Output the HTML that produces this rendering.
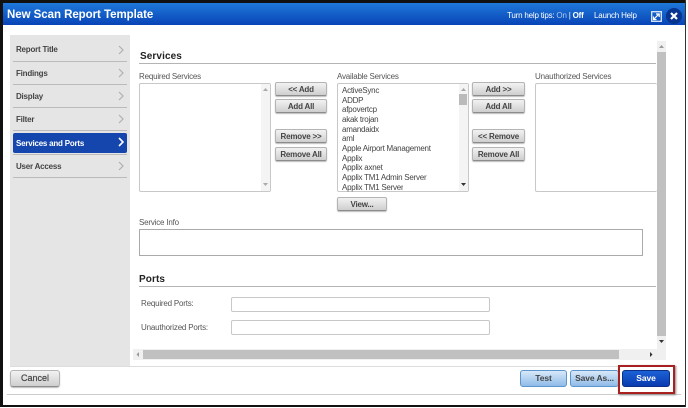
<!DOCTYPE html>
<html><head><meta charset="utf-8"><style>
html,body{margin:0;padding:0;background:#fff}
#p{position:relative;width:688px;height:408px;overflow:hidden;background:#fff;font-family:"Liberation Sans",sans-serif;font-size:8px;color:#444;filter:blur(.3px);letter-spacing:-.2px}
#p div{position:absolute}
.t{white-space:nowrap}
.si{left:16px;font-weight:bold;color:#444;font-size:8px;white-space:nowrap;letter-spacing:-.22px}
.sep{left:13px;width:114px;height:1px;background:#bbb}
.btn{background:linear-gradient(#f2f2f2,#cfcfcf);border:1px solid #b4b4b4;border-bottom:1px solid #8c8c8c;border-radius:2px;box-sizing:border-box;text-align:center;font-weight:bold;color:#444;font-size:8px;white-space:nowrap;box-shadow:0 1px 1px #bbb;letter-spacing:-.2px}
.box{border:1px solid #c8c8c8;box-sizing:border-box;background:#fff;border-radius:2px}
.lbl{color:#555;white-space:nowrap;font-size:8px;letter-spacing:-.2px}
.line{height:1px;background:#b4b4b4}
h2{position:absolute;margin:0;font-size:10px;font-weight:bold;color:#222;white-space:nowrap;letter-spacing:.1px}
.opt{left:342px;color:#444;font-size:8px;white-space:nowrap;line-height:10px;letter-spacing:-.25px}
.blue{background:linear-gradient(#d8e9f9,#8fbbe8);border:1px solid #5d94cc;border-radius:3px;box-sizing:border-box;text-align:center;font-weight:bold;color:#444;font-size:8.5px;white-space:nowrap;letter-spacing:-.1px}
</style></head><body><div id="p">
<div style="left:0;top:0;width:686px;height:3px;background:#111"></div>
<div style="left:0;top:0;width:2.500px;height:407px;background:#111"></div>
<div style="left:0;top:405px;width:686px;height:2px;background:#111"></div>
<div style="left:685px;top:0;width:1px;height:407px;background:#333"></div>
<div style="left:3px;top:3px;width:682px;height:22px;background:linear-gradient(#1f79da,#0844b6)"></div>
<div class="t" style="left:7px;top:8px;font-size:11.500px;font-weight:bold;color:#fff;line-height:14px;letter-spacing:-.05px">New Scan Report Template</div>
<div class="t" style="left:507px;top:11px;font-size:8px;color:#fff;line-height:10px;letter-spacing:-.2px">Turn help tips: <span style="color:#a9c8ee">On</span> | <b>Off</b></div>
<div class="t" style="left:594px;top:11px;font-size:8px;color:#fff;line-height:10px;letter-spacing:-.2px">Launch Help</div>
<div style="left:651px;top:11px;width:11px;height:11px"><svg width="11" height="11" viewBox="0 0 11 11" style="display:block"><rect x=".7" y=".7" width="9.6" height="9.6" fill="none" stroke="#dfeaf8" stroke-width="1.3"/><path d="M3 8L8 3M5 3h3.2v3M2.5 5.5v3h3" fill="none" stroke="#fff" stroke-width="1.2"/></svg></div>
<div style="left:666px;top:8px;width:16px;height:16px;border-radius:50%;background:#07348f"><svg width="16" height="16" viewBox="0 0 16 16" style="display:block"><path d="M5 5l6 6M11 5l-6 6" stroke="#fff" stroke-width="2.2"/></svg></div>

<div style="left:10px;top:35px;width:120px;height:331px;background:#e5e5e5"></div>
<div class="si" style="top:45px">Report Title</div>
<div class="si" style="top:69px">Findings</div>
<div class="si" style="top:92px">Display</div>
<div class="si" style="top:115px">Filter</div>
<div class="si" style="top:162px">User Access</div>
<div class="sep" style="top:61px"></div>
<div class="sep" style="top:84px"></div>
<div class="sep" style="top:107px"></div>
<div class="sep" style="top:130px"></div>
<div class="sep" style="top:154px"></div>
<div class="sep" style="top:177px"></div>
<div style="left:13px;top:133px;width:114px;height:20px;background:#1546ad;border-radius:2px"></div>
<div class="si" style="top:139px;left:16px;color:#fff">Services and Ports</div>
<svg style="position:absolute;left:117px;top:45px" width="8" height="130" viewBox="0 0 8 130" fill="none" stroke="#b0b0b0" stroke-width="1.2"><path d="M2 1l4 4-4 4M2 24l4 4-4 4M2 47l4 4-4 4M2 70l4 4-4 4M2 117l4 4-4 4"/><path d="M2 93l4 4-4 4" stroke="#fff" stroke-width="1.6"/></svg>

<h2 style="left:140px;top:51px">Services</h2>
<div class="line" style="left:139px;top:63px;width:517px"></div>
<div class="lbl" style="left:139px;top:72px">Required Services</div>
<div class="lbl" style="left:337px;top:72px">Available Services</div>
<div class="lbl" style="left:535px;top:72px">Unauthorized Services</div>

<div class="box" style="left:139px;top:83px;width:132px;height:109px"></div>
<div style="left:261px;top:84px;width:9px;height:107px;background:#f4f4f4"></div>
<svg style="position:absolute;left:263px;top:87px" width="6" height="100"><path d="M0 4l2.500-3 2.500 3zM0 96l2.500 3 2.500-3z" fill="#aaa"/></svg>

<div class="box" style="left:337px;top:83px;width:132px;height:109px;overflow:hidden"></div>
<div class="opt" style="top:86px">ActiveSync</div>
<div class="opt" style="top:96px">ADDP</div>
<div class="opt" style="top:105px">afpovertcp</div>
<div class="opt" style="top:115px">akak trojan</div>
<div class="opt" style="top:125px">amandaidx</div>
<div class="opt" style="top:134px">aml</div>
<div class="opt" style="top:144px">Apple Airport Management</div>
<div class="opt" style="top:154px">Applix</div>
<div class="opt" style="top:163px">Applix axnet</div>
<div class="opt" style="top:173px">Applix TM1 Admin Server</div>
<div class="opt" style="top:183px;height:9px;overflow:hidden">Applix TM1 Server</div>
<div style="left:459px;top:84px;width:9px;height:107px;background:#f4f4f4"></div>
<div style="left:459px;top:94px;width:8px;height:11px;background:#bbb"></div>
<svg style="position:absolute;left:461px;top:87px" width="6" height="100"><path d="M0 4l2.500-3 2.500 3z" fill="#aaa"/><path d="M0 96l2.500 3 2.500-3z" fill="#333"/></svg>

<div class="box" style="left:535px;top:83px;width:122px;height:109px;border-right:none"></div>

<div class="btn" style="left:275px;top:82px;width:52px;height:14px;line-height:13px">&lt;&lt; Add</div>
<div class="btn" style="left:275px;top:99px;width:52px;height:14px;line-height:13px">Add All</div>
<div class="btn" style="left:275px;top:129px;width:52px;height:14px;line-height:13px">Remove &gt;&gt;</div>
<div class="btn" style="left:275px;top:147px;width:52px;height:14px;line-height:13px">Remove All</div>
<div class="btn" style="left:472px;top:82px;width:53px;height:14px;line-height:13px">Add &gt;&gt;</div>
<div class="btn" style="left:472px;top:99px;width:53px;height:14px;line-height:13px">Add All</div>
<div class="btn" style="left:472px;top:129px;width:53px;height:14px;line-height:13px">&lt;&lt; Remove</div>
<div class="btn" style="left:472px;top:147px;width:53px;height:14px;line-height:13px">Remove All</div>
<div class="btn" style="left:337px;top:197px;width:50px;height:14px;line-height:13px">View...</div>

<div class="lbl" style="left:139px;top:218px">Service Info</div>
<div style="left:139px;top:229px;width:504px;height:27px;box-sizing:border-box;border:1px solid #aaa;background:#fff"></div>

<h2 style="left:139px;top:274px">Ports</h2>
<div class="line" style="left:139px;top:286px;width:517px"></div>
<div class="lbl" style="left:141px;top:299px">Required Ports:</div>
<div class="lbl" style="left:141px;top:323px">Unauthorized Ports:</div>
<div class="box" style="left:231px;top:297px;width:259px;height:15px"></div>
<div class="box" style="left:231px;top:320px;width:259px;height:15px"></div>

<div style="left:657px;top:41px;width:9px;height:319px;background:#f0f0f0"></div>
<div style="left:657px;top:52px;width:9px;height:284px;background:#c0c0c0"></div>
<svg style="position:absolute;left:659px;top:44px" width="6" height="300"><path d="M0 4l2.500-3 2.500 3z" fill="#999"/><path d="M0 296l2.500 3 2.500-3z" fill="#333"/></svg>
<div style="left:133px;top:349px;width:533px;height:11px;background:#f0f0f0"></div>
<div style="left:143px;top:350px;width:476px;height:9px;background:#c0c0c0"></div>
<svg style="position:absolute;left:136px;top:351px" width="520" height="7"><path d="M3 1l-2.500 2.500 2.500 2.500z" fill="#999"/><path d="M514 1l2.500 2.500-2.500 2.500z" fill="#333"/></svg>

<div style="left:10px;top:366px;width:667px;height:1px;background:#ddd"></div>
<div style="left:7px;top:394px;width:674px;height:1px;background:#ccc"></div>
<div class="btn" style="left:10px;top:370px;width:50px;height:17px;line-height:15px;border-radius:3px;font-size:9px;letter-spacing:0;font-weight:normal;-webkit-text-stroke:.2px #444">Cancel</div>
<div class="blue" style="left:520px;top:370px;width:47px;height:17px;line-height:15px">Test</div>
<div class="blue" style="left:570px;top:370px;width:49px;height:17px;line-height:15px">Save As...</div>
<div style="left:618px;top:365px;width:57px;height:29px;box-sizing:border-box;border:2px solid #a8201f;box-shadow:1px 1px 2px #888;background:#fff"></div>
<div style="left:622px;top:370px;width:48px;height:17px;box-sizing:border-box;border:1px solid #0b2f86;border-radius:3px;background:linear-gradient(#1b62d6,#0a3bb0);text-align:center;line-height:15px;color:#fff;font-weight:bold;font-size:8.500px;letter-spacing:-.1px">Save</div>
</div></body></html>
